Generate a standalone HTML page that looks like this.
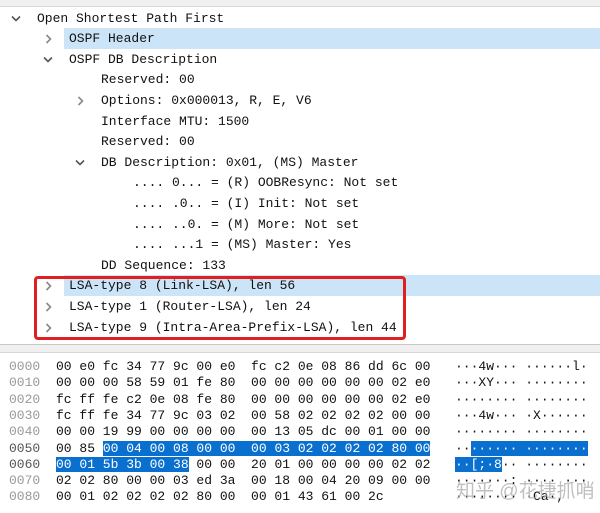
<!DOCTYPE html>
<html><head><meta charset="utf-8"><style>
body{margin:0;width:600px;height:513px;background:#fff;overflow:hidden;position:relative;font-family:"Liberation Mono",monospace;font-size:13px;color:#111}
.r{position:absolute;left:0;right:0;height:20.6px;line-height:21.6px;white-space:pre}
.hl{background:#cce4f7}
.t{position:absolute}
svg.a{position:absolute;top:7px}
.h{position:absolute;left:0;white-space:pre;line-height:16.3px;height:16.3px}
.o{color:#999;position:absolute;left:9px}
.s{background:#0a70d0;color:#fff}
.ascii{position:absolute;left:455px;white-space:pre}
</style></head><body>
<div style="position:absolute;left:0;right:0;top:0;height:6px;background:#f0f0f0;border-bottom:1px solid #d8d8d8"></div>

<div class="r" style="top:7.5px"><svg class="a" style="left:11px" width="10" height="8"><polyline points="1,1.5 5,5.5 9,1.5" fill="none" stroke="#555" stroke-width="1.6"/></svg><span class="t" style="left:37px">Open Shortest Path First</span></div>
<div class="r" style="top:28.1px"><div class="hl" style="position:absolute;left:64px;right:0;top:0;bottom:0"></div><svg class="a" style="left:45px;top:6px" width="8" height="10"><polyline points="1.5,1 5.5,5 1.5,9" fill="none" stroke="#888" stroke-width="1.6"/></svg><span class="t" style="left:69px">OSPF Header</span></div>
<div class="r" style="top:48.7px"><svg class="a" style="left:43px" width="10" height="8"><polyline points="1,1.5 5,5.5 9,1.5" fill="none" stroke="#555" stroke-width="1.6"/></svg><span class="t" style="left:69px">OSPF DB Description</span></div>
<div class="r" style="top:69.3px"><span class="t" style="left:101px">Reserved: 00</span></div>
<div class="r" style="top:89.9px"><svg class="a" style="left:77px;top:6px" width="8" height="10"><polyline points="1.5,1 5.5,5 1.5,9" fill="none" stroke="#888" stroke-width="1.6"/></svg><span class="t" style="left:101px">Options: 0x000013, R, E, V6</span></div>
<div class="r" style="top:110.5px"><span class="t" style="left:101px">Interface MTU: 1500</span></div>
<div class="r" style="top:131.1px"><span class="t" style="left:101px">Reserved: 00</span></div>
<div class="r" style="top:151.7px"><svg class="a" style="left:75px" width="10" height="8"><polyline points="1,1.5 5,5.5 9,1.5" fill="none" stroke="#555" stroke-width="1.6"/></svg><span class="t" style="left:101px">DB Description: 0x01, (MS) Master</span></div>
<div class="r" style="top:172.3px"><span class="t" style="left:133px">.... 0... = (R) OOBResync: Not set</span></div>
<div class="r" style="top:192.9px"><span class="t" style="left:133px">.... .0.. = (I) Init: Not set</span></div>
<div class="r" style="top:213.5px"><span class="t" style="left:133px">.... ..0. = (M) More: Not set</span></div>
<div class="r" style="top:234.1px"><span class="t" style="left:133px">.... ...1 = (MS) Master: Yes</span></div>
<div class="r" style="top:254.7px"><span class="t" style="left:101px">DD Sequence: 133</span></div>
<div class="r" style="top:275.3px"><div class="hl" style="position:absolute;left:64px;right:0;top:0;bottom:0"></div><svg class="a" style="left:45px;top:6px" width="8" height="10"><polyline points="1.5,1 5.5,5 1.5,9" fill="none" stroke="#888" stroke-width="1.6"/></svg><span class="t" style="left:69px">LSA-type 8 (Link-LSA), len 56</span></div>
<div class="r" style="top:295.9px"><svg class="a" style="left:45px;top:6px" width="8" height="10"><polyline points="1.5,1 5.5,5 1.5,9" fill="none" stroke="#888" stroke-width="1.6"/></svg><span class="t" style="left:69px">LSA-type 1 (Router-LSA), len 24</span></div>
<div class="r" style="top:316.5px"><svg class="a" style="left:45px;top:6px" width="8" height="10"><polyline points="1.5,1 5.5,5 1.5,9" fill="none" stroke="#888" stroke-width="1.6"/></svg><span class="t" style="left:69px">LSA-type 9 (Intra-Area-Prefix-LSA), len 44</span></div>
<div style="position:absolute;left:34px;top:276px;width:366px;height:58px;border:3px solid #e02020;border-radius:4px"></div>

<div style="position:absolute;left:0;right:0;top:344px;height:7px;background:#f0f0f0;border-top:1px solid #c8c8c8;border-bottom:1px solid #d8d8d8"></div>

<div class="h" style="top:359px;width:600px"><span class="o">0000</span><span class="t" style="left:56px">00 e0 fc 34 77 9c 00 e0  fc c2 0e 08 86 dd 6c 00</span><span class="ascii">···4w··· ······l·</span></div>
<div class="h" style="top:375.3px;width:600px"><span class="o">0010</span><span class="t" style="left:56px">00 00 00 58 59 01 fe 80  00 00 00 00 00 00 02 e0</span><span class="ascii">···XY··· ········</span></div>
<div class="h" style="top:391.6px;width:600px"><span class="o">0020</span><span class="t" style="left:56px">fc ff fe c2 0e 08 fe 80  00 00 00 00 00 00 02 e0</span><span class="ascii">········ ········</span></div>
<div class="h" style="top:407.9px;width:600px"><span class="o">0030</span><span class="t" style="left:56px">fc ff fe 34 77 9c 03 02  00 58 02 02 02 02 00 00</span><span class="ascii">···4w··· ·X······</span></div>
<div class="h" style="top:424.2px;width:600px"><span class="o">0040</span><span class="t" style="left:56px">00 00 19 99 00 00 00 00  00 13 05 dc 00 01 00 00</span><span class="ascii">········ ········</span></div>
<div class="h" style="top:440.5px;width:600px"><span class="o" style="color:#555">0050</span><span class="t" style="left:56px">00 85 <span class="s">00 04 00 08 00 00  00 03 02 02 02 02 80 00</span></span><span class="ascii">··<span class="s">······ ········</span></span></div>
<div class="h" style="top:456.8px;width:600px"><span class="o" style="color:#555">0060</span><span class="t" style="left:56px"><span class="s">00 01 5b 3b 00 38</span> 00 00  20 01 00 00 00 00 02 02</span><span class="ascii"><span class="s">··[;·8</span>·· ········</span></div>
<div class="h" style="top:473.1px;width:600px"><span class="o">0070</span><span class="t" style="left:56px">02 02 80 00 00 03 ed 3a  00 18 00 04 20 09 00 00</span><span class="ascii">·······: ···· ···</span></div>
<div class="h" style="top:489.4px;width:600px"><span class="o">0080</span><span class="t" style="left:56px">00 01 02 02 02 02 80 00  00 01 43 61 00 2c</span><span class="ascii">········ ·Ca·,</span></div>

<div style="position:absolute;left:456px;top:476px;font-family:'Liberation Sans','Noto Sans CJK SC',sans-serif;font-size:19px;color:rgba(170,170,170,0.75);white-space:nowrap">知乎 @花捷抓哨</div>
</body></html>
